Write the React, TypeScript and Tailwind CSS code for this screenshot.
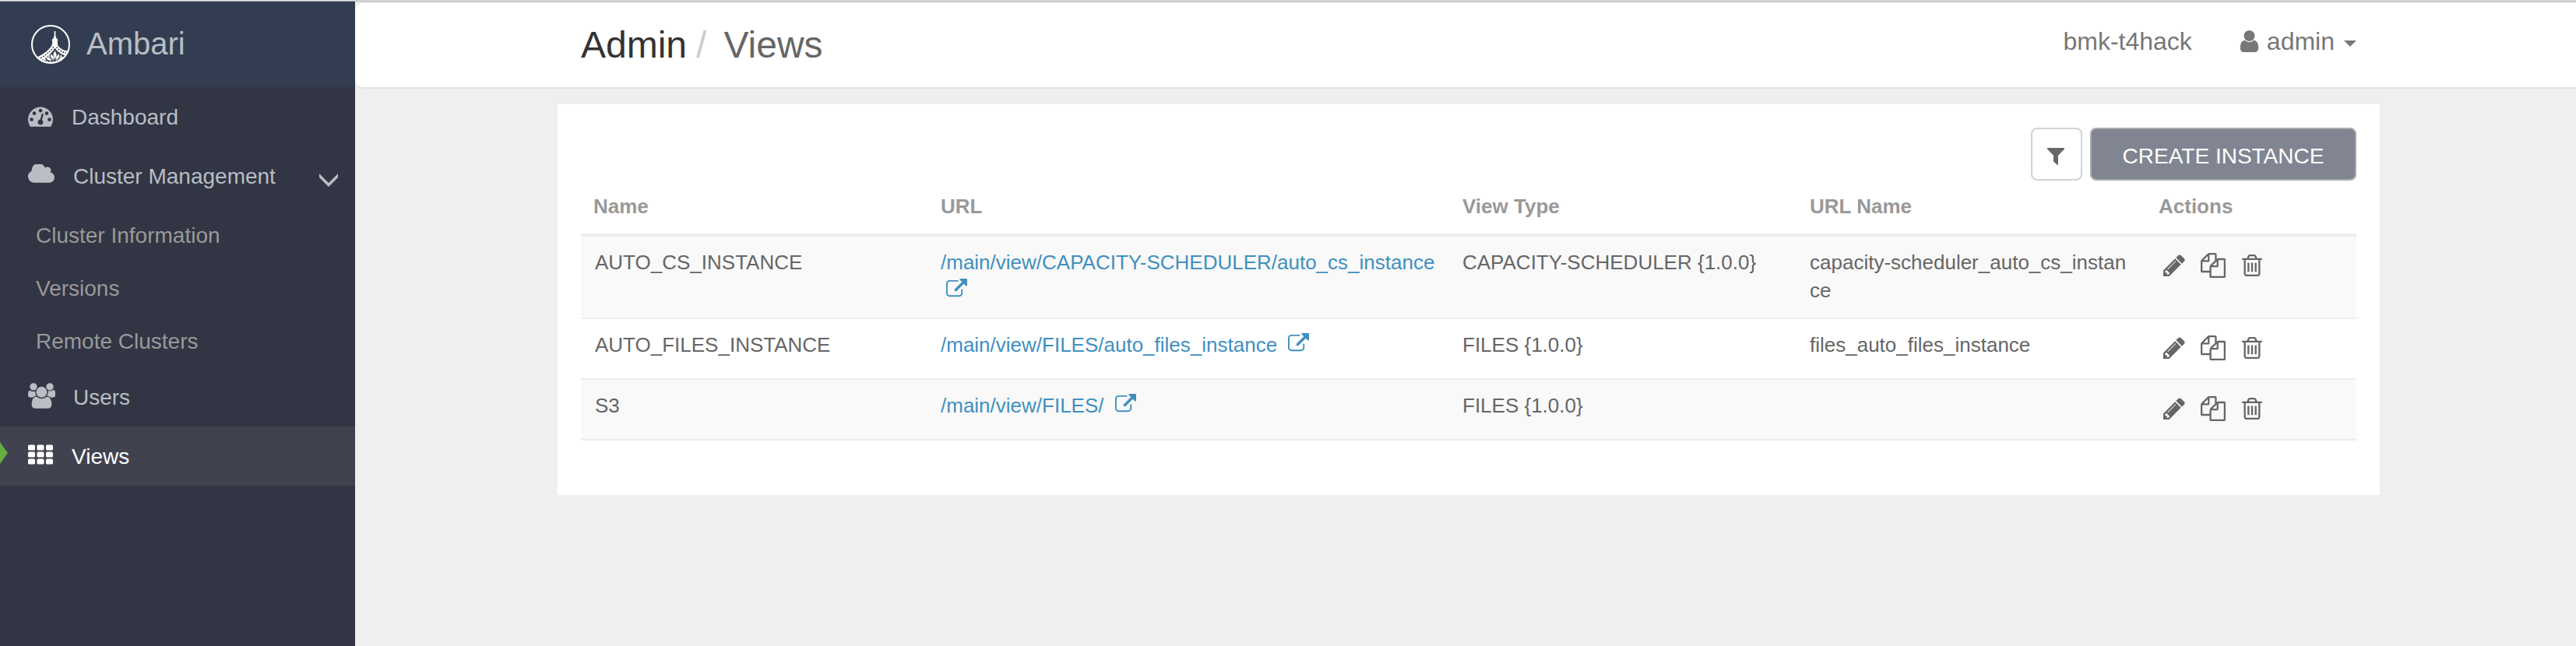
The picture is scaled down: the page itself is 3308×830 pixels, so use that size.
import React from "react";

type IconProps = { d: string; box: string; className: string };

const Icon = ({ d, box, className }: IconProps) => (
  <svg viewBox={box} className={className} fill="currentColor">
    <path d={d} />
  </svg>
);

const TACHOMETER =
  "M384 1152q0-53-37.5-90.5t-90.5-37.5-90.5 37.5-37.5 90.5 37.5 90.5 90.5 37.5 90.5-37.5 37.5-90.5zm192-448q0-53-37.5-90.5t-90.5-37.5-90.5 37.5-37.5 90.5 37.5 90.5 90.5 37.5 90.5-37.5 37.5-90.5zm428 481l101-382q6-26-7.5-48.5t-38.5-29.5-48 6.5-30 39.5l-101 382q-60 5-107 43.5t-63 98.5q-20 77 20 146t117 89 146-20 89-117q16-60-6-117t-72-91zm660-33q0-53-37.5-90.5t-90.5-37.5-90.5 37.5-37.5 90.5 37.5 90.5 90.5 37.5 90.5-37.5 37.5-90.5zm-640-640q0-53-37.5-90.5t-90.5-37.5-90.5 37.5-37.5 90.5 37.5 90.5 90.5 37.5 90.5-37.5 37.5-90.5zm448 192q0-53-37.5-90.5t-90.5-37.5-90.5 37.5-37.5 90.5 37.5 90.5 90.5 37.5 90.5-37.5 37.5-90.5zm320 448q0 261-141 483-19 29-54 29h-1402q-35 0-54-29-141-221-141-483 0-182 71-348t191-286 286-191 348-71 348 71 286 191 191 286 71 348z";
const CLOUD =
  "M1984 1152q0 159-112.5 271.5t-271.5 112.5h-1088q-185 0-316.5-131.5t-131.5-316.5q0-132 71-241.5t187-163.5q-2-28-2-43 0-212 150-362t362-150q158 0 286.5 88t187.5 230q70-62 166-62 106 0 181 75t75 181q0 75-41 138 129 30 213 134.5t84 239.5z";
const USERS =
  "M657 896q-162 5-265 128h-134q-82 0-138-40.5t-56-118.5q0-353 124-353 6 0 43.5 21t97.5 42.5 119 21.5q67 0 133-23-5 37-5 66 0 159 93 293zm1071 637q0 120-73 189.5t-194 69.5h-874q-121 0-194-69.5t-73-189.5q0-53 3.5-103.5t14-109 26.5-108.5 43-97.5 62-81 85.5-53.5 111.5-20q10 0 43 21.5t73 48 107 48 135 21.5 135-21.5 107-48 73-48 43-21.5q61 0 111.5 20t85.5 53.5 62 81 43 97.5 26.5 108.5 14 109 3.5 103.5zm-1024-1277q0 106-75 181t-181 75-181-75-75-181 75-181 181-75 181 75 75 181zm704 384q0 159-112.5 271.5t-271.5 112.5-271.5-112.5-112.5-271.5 112.5-271.5 271.5-112.5 271.5 112.5 112.5 271.5zm576 225q0 78-56 118.5t-138 40.5h-134q-103-123-265-128 93-134 93-293 0-29-5-66 66 23 133 23 59 0 119-21.5t97.5-42.5 43.5-21q124 0 124 353zm-128-609q0 106-75 181t-181 75-181-75-75-181 75-181 181-75 181 75 75 181z";
const USER =
  "M1536 1399q0 109-62.5 187t-150.5 78h-854q-88 0-150.5-78t-62.5-187q0-85 8.5-160.5t31.5-152 58.5-131 94-89 134.5-34.5q131 128 313 128t313-128q76 0 134.5 34.5t94 89 58.5 131 31.5 152 8.5 160.5zm-256-887q0 159-112.5 271.5t-271.5 112.5-271.5-112.5-112.5-271.5 112.5-271.5 271.5-112.5 271.5 112.5 112.5 271.5z";
const EXTERNAL =
  "M1408 928v320q0 119-84.5 203.5t-203.5 84.5h-832q-119 0-203.5-84.5t-84.5-203.5v-832q0-119 84.5-203.5t203.5-84.5h704q14 0 23 9t9 23v64q0 14-9 23t-23 9h-704q-66 0-113 47t-47 113v832q0 66 47 113t113 47h832q66 0 113-47t47-113v-320q0-14 9-23t23-9h64q14 0 23 9t9 23zm384-864v512q0 26-19 45t-45 19-45-19l-176-176-652 652q-10 10-23 10t-23-10l-114-114q-10-10-10-23t10-23l652-652-176-176q-19-19-19-45t19-45 45-19h512q26 0 45 19t19 45z";
const FILES =
  "M1696 384q40 0 68 28t28 68v1216q0 40-28 68t-68 28h-960q-40 0-68-28t-28-68v-288h-544q-40 0-68-28t-28-68v-672q0-40 20-88t48-76l408-408q28-28 76-48t88-20h416q40 0 68 28t28 68v328q68-40 128-40h416zm-544 213l-299 299h299v-299zm-640-384l-299 299h299v-299zm196 647l316-316v-416h-384v416q0 40-28 68t-68 28h-416v640h512v-256q0-40 20-88t48-76zm956 804v-1152h-384v416q0 40-28 68t-68 28h-416v640h896z";
const TRASH =
  "M704 736v576q0 14-9 23t-23 9h-64q-14 0-23-9t-9-23v-576q0-14 9-23t23-9h64q14 0 23 9t9 23zm256 0v576q0 14-9 23t-23 9h-64q-14 0-23-9t-9-23v-576q0-14 9-23t23-9h64q14 0 23 9t9 23zm256 0v576q0 14-9 23t-23 9h-64q-14 0-23-9t-9-23v-576q0-14 9-23t23-9h64q14 0 23 9t9 23zm128 724v-948h-896v948q0 22 7 40.5t14.5 27 10.5 8.5h832q3 0 10.5-8.5t14.5-27 7-40.5zm-672-1076h448l-48-117q-7-9-17-11h-317q-10 2-17 11zm928 32v64q0 14-9 23t-23 9h-96v948q0 83-47 143.5t-113 60.5h-832q-66 0-113-58.5t-47-141.5v-952h-96q-14 0-23-9t-9-23v-64q0-14 9-23t23-9h309l70-167q15-37 54-63t79-26h320q40 0 79 26t54 63l70 167h309q14 0 23 9t9 23z";
const PENCIL =
  "M491 1536l91-91-235-235-91 91v107h128v128h107zm523-928q0-22-22-22-10 0-17 7l-542 542q-7 7-7 17 0 22 22 22 10 0 17-7l542-542q7-7 7-17zm-54-192l416 416-832 832h-416v-416zm683 96q0 53-37 90l-166 166-416-416 166-165q36-38 90-38 53 0 91 38l235 234q37 39 37 91z";

const Logo = () => (
  <svg viewBox="0 0 50 50" className="size-[50px]" fill="none" stroke="#fff">
    <path d="M30.500 8v9" strokeWidth="1.700" />
    <path d="M29.500 14.500h2l.8 2.500 2 2-.6 2.500.6 4.500h-7.600l.6-4.500-.6-2.500 2-2z" fill="#fff" stroke="none" />
    <path d="M27.500 25C23 32 17 37 8.500 41l4.500 4.500C21 41 27 36 30.500 29.500 33 34 39 38.500 45 39.500l2-6C41 32.500 36 30 33.500 25z" fill="#fff" stroke="none" />
    <path d="M12 42.500C19.500 38.500 25.500 33.500 29 27.500M45.500 36.500C39.500 35 35 32 32 27.500" stroke="#323d51" strokeWidth="1.500" strokeDasharray="1.800 1.600" />
    <path
      d="M30.500 33.500l2 4.500-2 6-2-6zM25 37.500l3.500 3 .5 5-3.500-3.500zM36 37.500l-3.500 3-.5 5 3.500-3.500zM19 41.500l4.500.5 3 4-5-1zM42 41.500l-4.500.5-3 4 5-1zM22.500 38l1.500 2.500-2 .5zM38.500 38.500l-1.500 2.500 2.500.5zM15 44l3-1.500 1 3z"
      fill="#fff"
      strokeWidth="0.500"
    />
    <path d="M15 45.500c6 3 14 3.500 21 0" strokeWidth="1.500" strokeDasharray="3 1.200" />
    <circle cx="25" cy="25" r="24" strokeWidth="2" />
  </svg>
);

const Grid = () => (
  <svg viewBox="0 0 32 26" className="h-[26px] w-8" fill="currentColor">
    {[0, 11.5, 23].map((x) =>
      [0.5, 9.5, 18.5].map((y) => <rect key={x + "-" + y} x={x} y={y} width="9" height="7" rx="1.600" />)
    )}
  </svg>
);

type Row = { name: string; url: string; type: string; urlName: string; height: string };

const rows: Row[] = [
  { name: "AUTO_CS_INSTANCE", url: "/main/view/CAPACITY-SCHEDULER/auto_cs_instance", type: "CAPACITY-SCHEDULER {1.0.0}", urlName: "capacity-scheduler_auto_cs_instance", height: "h-[106px] bg-[#f9f9f9]" },
  { name: "AUTO_FILES_INSTANCE", url: "/main/view/FILES/auto_files_instance", type: "FILES {1.0.0}", urlName: "files_auto_files_instance", height: "h-[78px]" },
  { name: "S3", url: "/main/view/FILES/", type: "FILES {1.0.0}", urlName: "", height: "h-[78px] bg-[#f9f9f9]" },
];

const COLS = "grid grid-cols-[446px_670px_446px_448px_270px]";

export default function App() {
  return (
    <div className="flex h-[830px] w-[3308px] flex-col overflow-hidden bg-[#efefef] font-['Liberation_Sans',Arial,sans-serif] text-[26px] text-[#666]">
      <div className="h-0.5 shrink-0 border-b border-[#aeb2b2] bg-[#e4e5e5]" />
      <div className="flex min-h-0 grow">
        <aside className="w-[456px] shrink-0 bg-[#323544] text-[#b8bec4]">
          <div className="flex h-[110px] items-center bg-[#323d51] pl-10">
            <Logo />
            <span className="mb-0.5 ml-[21px] text-[40px] leading-none">Ambari</span>
          </div>
          <nav className="text-[28px] leading-none">
            <div className="flex h-[76px] items-center pl-9">
              <Icon d={TACHOMETER} box="0 0 1792 1792" className="mb-0.5 size-8" />
              <span className="mt-0.5 ml-6">Dashboard</span>
            </div>
            <div className="flex h-[76px] items-center pl-9">
              <Icon d={CLOUD} box="64 256 1920 1280" className="mb-[5px] h-[25px] w-[34px]" />
              <span className="mt-0.5 ml-6">Cluster Management</span>
              <svg viewBox="0 0 24 17" className="mt-2.5 mr-[22px] ml-auto h-[17px] w-6" fill="currentColor">
                <path d="M0 0L12 12 24 0V5L12 17 0 5z" />
              </svg>
            </div>
            <div className="flex h-[76px] items-center pt-0.5 pl-[46px] text-[#999]">Cluster Information</div>
            <div className="flex h-[60px] items-center pt-0.5 pl-[46px] text-[#999]">Versions</div>
            <div className="flex h-[72px] items-center pt-1.5 pl-[46px] text-[#999]">Remote Clusters</div>
            <div className="flex h-[76px] items-center pl-9">
              <Icon d={USERS} box="64 0 1920 1792" className="mb-[3px] h-[33px] w-[35px]" />
              <span className="mt-0.5 ml-[23px]">Users</span>
            </div>
            <div className="flex h-[76px] items-center bg-[#40434f] text-white">
              <svg viewBox="0 0 10 28" className="mb-2 h-7 w-2.5 text-[#64ad41]" fill="currentColor">
                <path d="M0 0L10 14 0 28z" />
              </svg>
              <span className="mb-[5px] ml-[26px]">
                <Grid />
              </span>
              <span className="mt-0.5 ml-6">Views</span>
            </div>
          </nav>
        </aside>
        <main className="flex grow flex-col">
          <header className="flex h-28 shrink-0 items-center rounded-l-[10px] border-y-2 border-[#e4e4e4] bg-white pr-[282px] pl-[290px]">
            <h1 className="flex items-baseline text-[48px] leading-none">
              <span className="text-[#333]">Admin</span>
              <span className="ml-3 text-[#ccc]">/</span>
              <span className="ml-[22px] text-[#666]">Views</span>
            </h1>
            <div className="mb-2.5 ml-auto flex items-center text-[32px] leading-none text-[#777]">
              <span>bmk-t4hack</span>
              <Icon d={USER} box="256 128 1280 1536" className="ml-[61px] h-7 w-[25px]" />
              <span className="ml-2.5">admin</span>
              <svg viewBox="0 0 16 8" className="mt-1.5 ml-3 h-2 w-4" fill="currentColor">
                <path d="M0 0h16L8 8z" />
              </svg>
            </div>
          </header>
          <section className="mt-5 ml-[260px] flex h-[502px] w-[2340px] flex-col bg-white px-[30px] pt-[30px]">
            <div className="flex h-[68px] shrink-0 justify-end gap-2.5">
              <button className="flex w-[66px] items-center justify-center rounded-lg border-2 border-[#cfd3d7]">
                <svg viewBox="0 0 22 22" className="mt-1.5 mr-0.5 size-[22px]" fill="currentColor">
                  <path d="M0 0h22v1.500L14 9.800V22L12.800 21.800 8 17.500V9.800L0 1.500z" />
                </svg>
              </button>
              <button className="w-[342px] rounded-lg border-2 border-[#aaa] bg-[#808591] pt-[5px] text-[28px] text-white">CREATE INSTANCE</button>
            </div>
            <div className={`${COLS} h-[72px] shrink-0 border-b-4 border-[#ededed] pt-[15px] font-bold leading-9 text-[#999]`}>
              {["Name", "URL", "View Type", "URL Name", "Actions"].map((h) => (
                <span key={h} className="pl-4">{h}</span>
              ))}
            </div>
            {rows.map((r) => (
              <div key={r.name} className={`${COLS} ${r.height} shrink-0 border-b-2 border-[#ededed] pt-[15px] leading-9`}>
                <span className="pl-[18px]">{r.name}</span>
                <span className="px-4 text-[#4190bf]">
                  {r.url} <Icon d={EXTERNAL} box="0 0 1792 1792" className="ml-[7px] inline size-[27px] align-[-3px]" />
                </span>
                <span className="pl-4">{r.type}</span>
                <span className="pr-6 pl-4 break-all">{r.urlName}</span>
                <span className="flex h-11 items-center pl-[22px]">
                  <Icon d={PENCIL} box="128 128 1536 1536" className="size-7" />
                  <Icon d={FILES} box="0 0 1792 1792" className="ml-5 size-8" />
                  <Icon d={TRASH} box="192 128 1408 1536" className="ml-[21px] h-7 w-[26px]" />
                </span>
              </div>
            ))}
          </section>
        </main>
      </div>
    </div>
  );
}
